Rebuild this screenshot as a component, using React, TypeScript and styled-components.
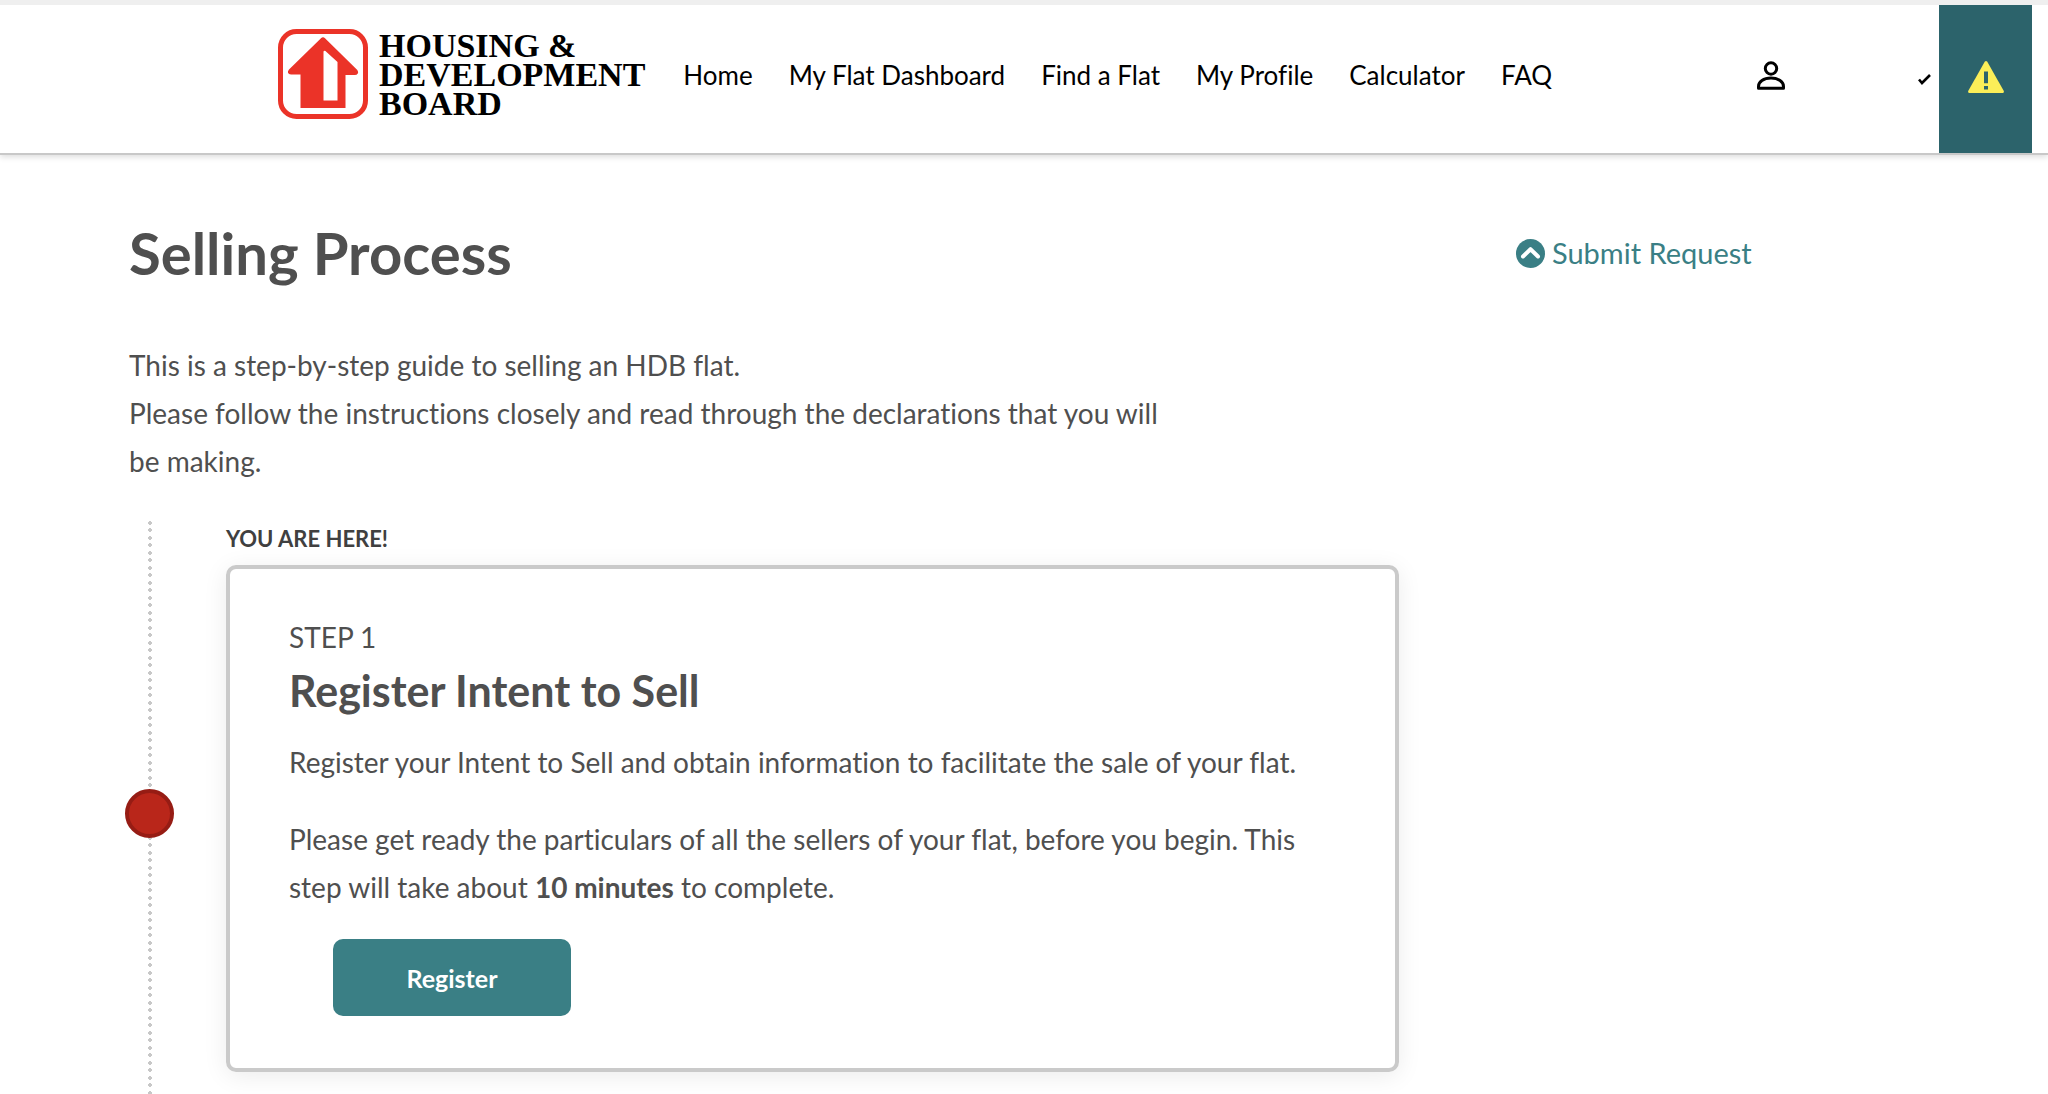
import React from 'react';
import styled, { createGlobalStyle } from 'styled-components';

const GlobalStyle = createGlobalStyle`
  *, *::before, *::after { box-sizing: border-box; }
  body {
    margin: 0;
    background: #fff;
    color: #4f4f4f;
    font-family: Lato, 'Open Sans', sans-serif;
    font-size: 28px;
    font-variant-ligatures: none;
    line-height: 48px;
  }
  h1, h2, p { margin: 0; }
  svg { display: block; flex: none; }
`;

const Page = styled.div`
  height: 100vh;
  overflow: hidden;
  border-top: 5px solid #efefef;
`;

const Header = styled.header`
  display: flex;
  align-items: stretch;
  height: 150px;
  padding: 0 16px 0 278px;
  border-bottom: 2px solid #c8c8c8;
  box-shadow: 0 2px 6px rgba(0, 0, 0, 0.14);
`;

const Logo = styled.a`
  display: flex;
  align-items: flex-start;
  gap: 11px;
  padding-top: 24px;
  color: #000;
  text-decoration: none;
`;

const LogoText = styled.span`
  font: bold 34px/29px 'Liberation Serif', serif;
  white-space: pre-line;
  padding-top: 2px;
`;

const Nav = styled.nav`
  display: flex;
  align-items: center;
  gap: 36px;
  margin-left: 38px;
  padding-bottom: 8px;
  white-space: nowrap;
`;

const NavLink = styled.a`
  color: #000;
  font-size: 26px;
  text-decoration: none;
`;

const Account = styled.button`
  display: flex;
  align-items: center;
  justify-content: space-between;
  width: 174px;
  margin-left: auto;
  margin-right: 8px;
  padding: 0;
  border: 0;
  background: none;
  color: #000;

  svg:first-child { margin-bottom: 8px; }
`;

const Alert = styled.button`
  display: grid;
  place-items: center;
  width: 93px;
  padding: 0 0 4px;
  border: 0;
  background: #2c636b;
`;

const Content = styled.main`
  display: grid;
  grid-template-columns: minmax(0, 1270px) auto;
  justify-content: start;
  column-gap: 117px;
  padding: 62px 129px 0;
`;

const Title = styled.h1`
  font-size: 58px;
  font-weight: 700;
  line-height: 72px;
`;

const RequestLink = styled.a`
  display: flex;
  align-items: center;
  gap: 7px;
  height: 72px;
  color: #3a7f85;
  font-size: 29px;
  text-decoration: none;
  white-space: nowrap;
`;

const Guide = styled.section`
  grid-column: 1;
`;

const Intro = styled.div`
  max-width: 1060px;
  margin-top: 52px;
`;

const Timeline = styled.div`
  display: flex;
  margin-top: 36px;
`;

const Track = styled.div`
  display: grid;
  place-items: center;
  flex: none;
  width: 49px;
  margin: 0 52px 0 -4px;
  background-image: radial-gradient(circle at 2px 2px, #c8c8c8 2px, transparent 2px),
    radial-gradient(circle at 2px 9px, #c8c8c8 2px, transparent 2px);
  background-size: 4px 15px;
  background-repeat: repeat-y;
  background-position: center top;
`;

const Marker = styled.span`
  width: 49px;
  height: 49px;
  border: 4px solid #961c14;
  border-radius: 50%;
  background: #b9261a;
`;

const Step = styled.div`
  flex: 1;
  min-width: 0;
  padding-bottom: 34px;
`;

const Here = styled.p`
  height: 44px;
  color: #404040;
  font-size: 22px;
  font-weight: 700;
  line-height: 36px;
`;

const Card = styled.article`
  display: flex;
  flex-direction: column;
  align-items: flex-start;
  padding: 44px 59px 52px;
  border: 4px solid #cacaca;
  border-radius: 10px;
  box-shadow: 0 4px 24px rgba(0, 0, 0, 0.08);
`;

const CardTitle = styled.h2`
  margin-bottom: 17px;
  font-size: 43px;
  line-height: 60px;
`;

const Paragraph = styled.p`
  & + & { margin-top: 29px; }
`;

const RegisterButton = styled.button`
  width: 238px;
  height: 77px;
  margin: 28px 0 0 44px;
  border: 0;
  border-radius: 10px;
  background: #3a7f85;
  color: #fff;
  font: 700 25px/36px Lato, sans-serif;
`;

const LogoMark = () => (
  <svg width="90" height="90" viewBox="0 0 90 90" aria-hidden="true">
    <rect x="2.5" y="2.5" width="85" height="85" rx="16" fill="#fff" stroke="#eb3328" strokeWidth="5" />
    <path
      d="M43 9.3q2-2 4 0L79.3 41q1.500 2 .5 3.500-1 1.500-3 1.500H67.500V79H22.500V45.500H13q-2.500 0-3-1.800-.5-1.500 1-3.200z"
      fill="#eb3328"
    />
    <path d="M45.500 22.500q1-1.500 3 .5L59.500 33V71.500h-14z" fill="#fff" />
  </svg>
);

const PersonIcon = () => (
  <svg width="28" height="29" viewBox="0 0 28 29" fill="none" stroke="currentColor" strokeWidth="3" aria-hidden="true">
    <circle cx="14" cy="7.500" r="5.700" />
    <path d="M1.500 27.300v-1.800c0-4.800 5-8.400 12.500-8.400s12.500 3.600 12.500 8.400v1.800z" strokeLinejoin="round" />
  </svg>
);

const CheckIcon = () => (
  <svg width="13" height="11" viewBox="0 0 13 11" fill="none" stroke="currentColor" strokeWidth="2.600" aria-hidden="true">
    <path d="M1 5.500l3 3.500L12 1" />
  </svg>
);

const WarningIcon = () => (
  <svg width="36" height="32" viewBox="0 0 36 32" aria-hidden="true">
    <path d="M16.700.8q1.300-1.600 2.600 0L35.800 30q.4 1.800-1.300 2h-33Q-.2 31.800.2 30z" fill="#fbee58" />
    <path d="M16 10.500h4v11.700h-4zM16 25h4v3.600h-4z" fill="#2c636b" />
  </svg>
);

const UpCircleIcon = () => (
  <svg width="29" height="29" viewBox="0 0 29 29" aria-hidden="true">
    <circle cx="14.500" cy="14.500" r="14.500" fill="#3a7f85" />
    <path d="M7 17.500l7.500-7.300 7.500 7.300" fill="none" stroke="#fff" strokeWidth="4" strokeLinecap="round" strokeLinejoin="round" />
  </svg>
);

const links = ['Home', 'My Flat Dashboard', 'Find a Flat', 'My Profile', 'Calculator', 'FAQ'];

export default function App() {
  return (
    <>
      <GlobalStyle />
      <Page>
        <Header>
          <Logo href="#">
            <LogoMark />
            <LogoText>{'HOUSING &\nDEVELOPMENT\nBOARD'}</LogoText>
          </Logo>
          <Nav>
            {links.map((label) => (
              <NavLink href="#" key={label}>{label}</NavLink>
            ))}
          </Nav>
          <Account aria-label="Account">
            <PersonIcon />
            <CheckIcon />
          </Account>
          <Alert aria-label="Alerts">
            <WarningIcon />
          </Alert>
        </Header>
        <Content>
          <Title>Selling Process</Title>
          <RequestLink href="#">
            <UpCircleIcon />
            Submit Request
          </RequestLink>
          <Guide>
            <Intro>
              <p>This is a step-by-step guide to selling an HDB flat.</p>
              <p>Please follow the instructions closely and read through the declarations that you will be making.</p>
            </Intro>
            <Timeline>
              <Track>
                <Marker />
              </Track>
              <Step>
                <Here>YOU ARE HERE!</Here>
                <Card>
                  <p>STEP 1</p>
                  <CardTitle>Register Intent to Sell</CardTitle>
                  <Paragraph>
                    Register your Intent to Sell and obtain information to facilitate the sale of your flat.
                  </Paragraph>
                  <Paragraph>
                    Please get ready the particulars of all the sellers of your flat, before you begin. This step will
                    take about <strong>10 minutes</strong> to complete.
                  </Paragraph>
                  <RegisterButton>Register</RegisterButton>
                </Card>
              </Step>
            </Timeline>
          </Guide>
        </Content>
      </Page>
    </>
  );
}
